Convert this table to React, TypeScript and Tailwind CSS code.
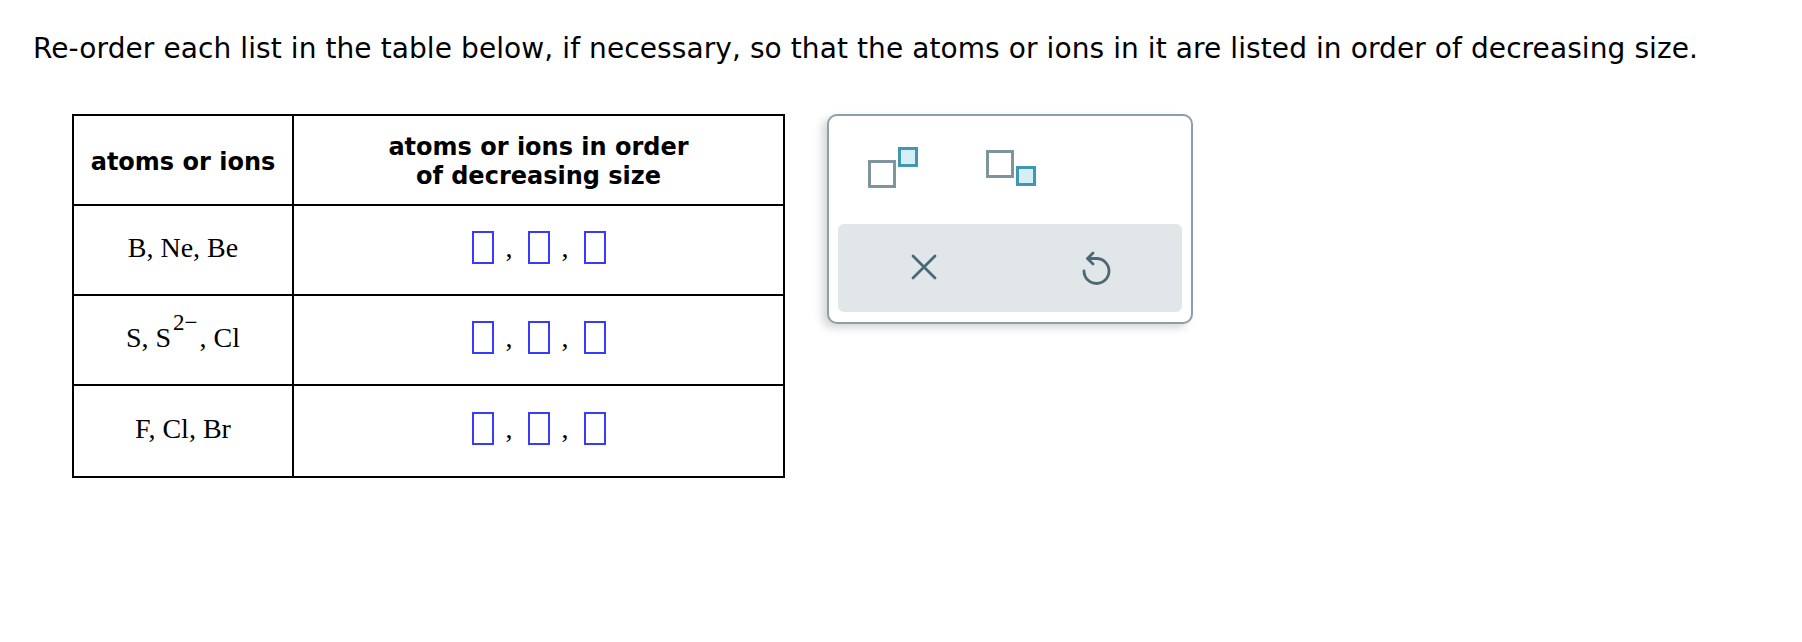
import { ReactNode } from 'react';

const rows: { label: ReactNode }[] = [
  { label: 'B, Ne, Be' },
  {
    label: (
      <>
        S, S
        <span className="relative -top-[17px] ml-[2px] mr-[2px] text-[23px]">2−</span>
        , Cl
      </>
    ),
  },
  { label: 'F, Cl, Br' },
];

function AnswerBox() {
  return <span className="block w-[22px] h-[33px] border-2 border-[#3a3aff]" />;
}

function AnswerSlots() {
  return (
    <div className="flex items-center">
      <AnswerBox />
      <span className="ml-[12px] mr-[15px] text-[28px] leading-none">,</span>
      <AnswerBox />
      <span className="ml-[12px] mr-[15px] text-[28px] leading-none">,</span>
      <AnswerBox />
    </div>
  );
}

function SuperscriptIcon() {
  return (
    <svg width="52" height="42" viewBox="0 0 52 42">
      <rect x="1.5" y="14.5" width="25" height="25" fill="none" stroke="#7f959e" strokeWidth="3" />
      <rect x="31.5" y="1.5" width="17" height="17" fill="#d5eef4" stroke="#3f97b3" strokeWidth="3" />
    </svg>
  );
}

function SubscriptIcon() {
  return (
    <svg width="52" height="38" viewBox="0 0 52 38">
      <rect x="1.5" y="1.5" width="25" height="25" fill="none" stroke="#7f959e" strokeWidth="3" />
      <rect x="31.5" y="17.5" width="17" height="17" fill="#d5eef4" stroke="#3f97b3" strokeWidth="3" />
    </svg>
  );
}

function ClearIcon() {
  return (
    <svg width="26" height="26" viewBox="0 0 26 26" fill="none" stroke="#4a6875" strokeWidth="2.8" strokeLinecap="round">
      <path d="M2 2 L24 24 M24 2 L2 24" />
    </svg>
  );
}

function UndoIcon() {
  return (
    <svg width="32" height="38" viewBox="0 0 32 38" fill="none" stroke="#4a6875" strokeWidth="2.8" strokeLinecap="round" strokeLinejoin="round">
      <path d="M16.5 9.5 A12.5 12.5 0 1 1 4 22" />
      <path d="M13 4 L7.5 9.5 L13 15" />
      <path d="M8 9.5 H16.5" />
    </svg>
  );
}

export default function App() {
  return (
    <div className="min-h-screen bg-white text-black font-['DejaVu_Sans',sans-serif]">
      {/* 問題文 */}
      <p className="pl-[33px] pt-[32px] text-[28px] leading-[34px] tracking-[0.09px]">
        Re-order each list in the table below, if necessary, so that the atoms or ions in it are listed in order of decreasing size.
      </p>

      <div className="flex items-start pl-[72px] mt-[48px]">
        {/* 表 */}
        <div className="w-[713px] border-2 border-black">
          <div className="flex h-[90px] pt-[4px] border-b-2 border-black font-bold text-[24px] leading-[29px]">
            <div className="w-[220px] border-r-2 border-black -mt-[4px] pt-[4px] flex items-center justify-center">
              atoms or ions
            </div>
            <div className="flex-1 flex flex-col items-center justify-center">
              <span>atoms or ions in order</span>
              <span>of decreasing size</span>
            </div>
          </div>
          {rows.map((row, i) => (
            <div
              key={i}
              className={`flex h-[90px] ${i < rows.length - 1 ? 'border-b-2 border-black' : ''} font-['Liberation_Serif',serif] text-[28px]`}
            >
              <div className="w-[220px] border-r-2 border-black flex items-center justify-center pb-[4px]">
                <span>{row.label}</span>
              </div>
              <div className="flex-1 flex items-center justify-center pb-[5px]">
                <AnswerSlots />
              </div>
            </div>
          ))}
        </div>

        {/* ツールパネル */}
        <div className="ml-[42px] w-[366px] h-[210px] rounded-[10px] border-2 border-[#8c9fa7] bg-white shadow-[-5px_4px_9px_rgba(0,0,0,0.16)] flex flex-col">
          <div className="h-[108px] flex items-start pl-[39px] pt-[31px] gap-[66px]">
            <button className="block">
              <SuperscriptIcon />
            </button>
            <button className="block mt-[3px]">
              <SubscriptIcon />
            </button>
          </div>
          <div className="mx-[9px] h-[88px] rounded-[6px] bg-[#e1e6e9] flex">
            <button className="flex-1 flex items-center justify-center pb-[2px]">
              <ClearIcon />
            </button>
            <button className="flex-1 flex items-center justify-center">
              <UndoIcon />
            </button>
          </div>
        </div>
      </div>
    </div>
  );
}
